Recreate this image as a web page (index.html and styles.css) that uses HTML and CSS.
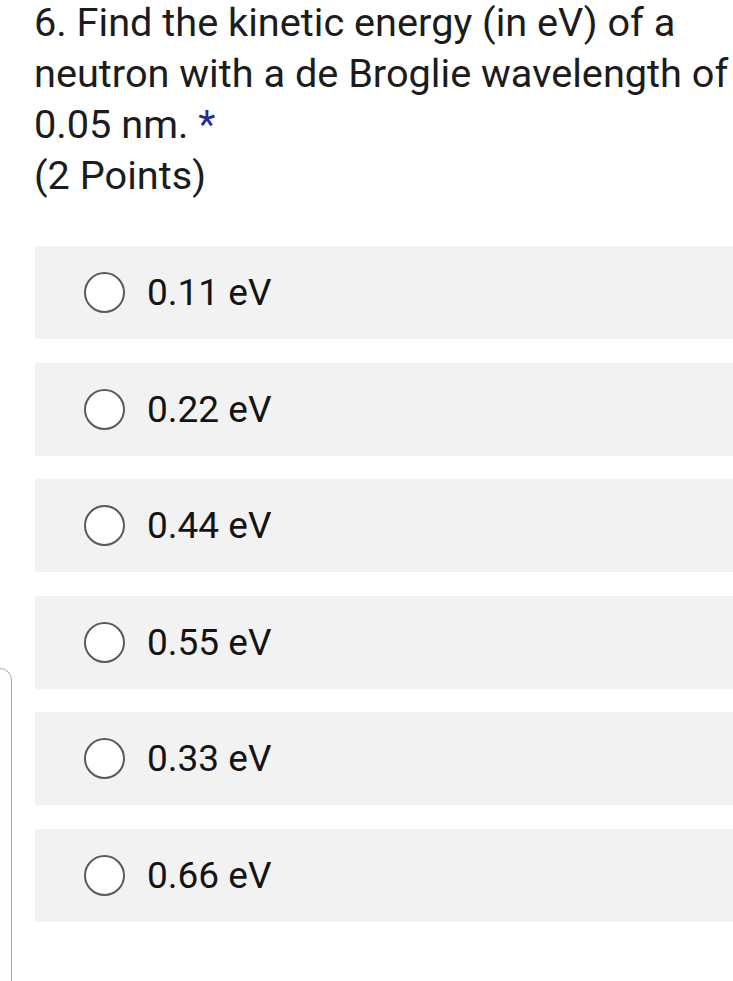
FILE: index.html
```html
<!DOCTYPE html>
<html lang="en">
<head>
<meta charset="utf-8">
<title>Question 6</title>
<link rel="stylesheet" href="styles.css">
</head>
<body>
<div class="side-panel"></div>
<main class="question">
  <div class="title">
    <div class="line">6. Find the kinetic energy (in eV) of a</div>
    <div class="line">neutron with a de Broglie wavelength of</div>
    <div class="line">0.05 nm. <span class="req">*</span></div>
    <div class="line">(2 Points)</div>
  </div>
  <div class="options">
    <label class="option"><span class="radio"></span><span class="opt-text">0.11 eV</span></label>
    <label class="option"><span class="radio"></span><span class="opt-text">0.22 eV</span></label>
    <label class="option"><span class="radio"></span><span class="opt-text">0.44 eV</span></label>
    <label class="option"><span class="radio"></span><span class="opt-text">0.55 eV</span></label>
    <label class="option"><span class="radio"></span><span class="opt-text">0.33 eV</span></label>
    <label class="option"><span class="radio"></span><span class="opt-text">0.66 eV</span></label>
  </div>
</main>
</body>
</html>
```

FILE: styles.css
```css
html, body {
  margin: 0;
  padding: 0;
  background: #ffffff;
  overflow: hidden;
}
body {
  width: 733px;
  height: 981px;
  position: relative;
  font-family: Roboto, "Liberation Sans", sans-serif;
  color: #1c1c1c;
}
.question {
  padding-left: 34px;
}
.title {
  font-size: 39.7px;
  line-height: 51px;
  margin-top: -3px;
  white-space: nowrap;
}
.req {
  color: #1f2c98;
}
.options {
  margin-top: 45px;
  display: flex;
  flex-direction: column;
  gap: 23.5px;
  padding-left: 1px;
}
.option {
  display: flex;
  align-items: center;
  height: 93px;
  background: #f2f2f2;
  padding-left: 49px;
  width: 720px;
  box-sizing: border-box;
}
.radio {
  width: 41px;
  height: 41px;
  box-sizing: border-box;
  border: 2.5px solid #5a5a5a;
  border-radius: 50%;
  background: #ffffff;
  flex: none;
}
.opt-text {
  margin-left: 22px;
  font-size: 37px;
  color: #141414;
}
.side-panel {
  position: absolute;
  left: -20px;
  top: 668px;
  width: 30px;
  height: 340px;
  border: 1.5px solid #a8a8a8;
  border-radius: 0 12px 0 0;
  background: #fdfdfd;
}
```
